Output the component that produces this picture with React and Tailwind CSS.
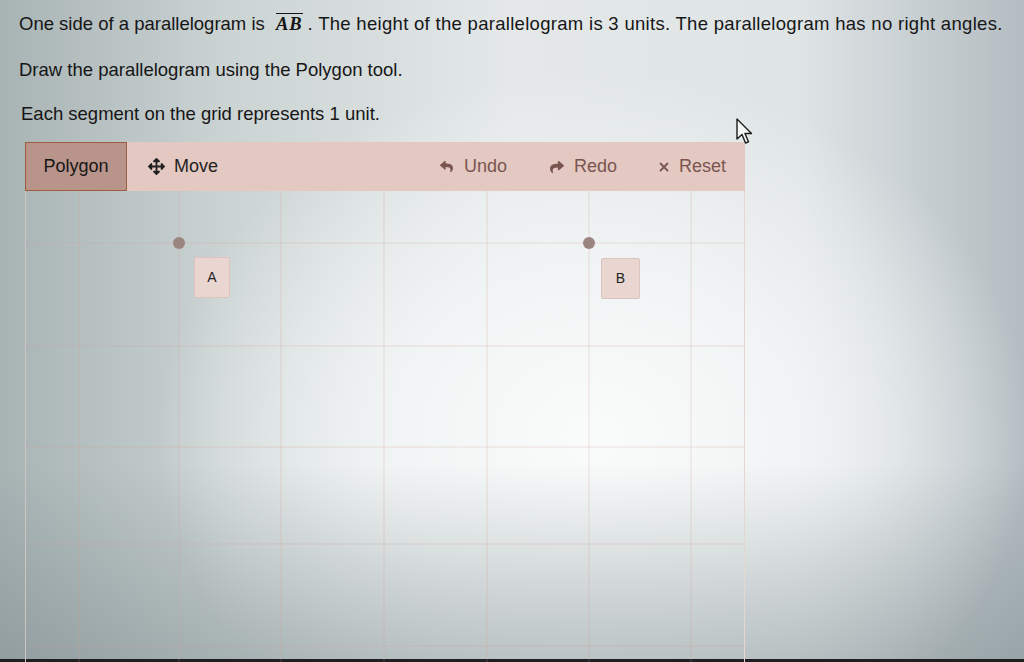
import { FaArrowsAlt, FaReply, FaShare } from "react-icons/fa";

const cols = [53, 153, 255, 358, 461, 563, 665];
const rows = [52, 155, 256, 353, 455];

function Grid() {
    return (
        <svg width="718" height="475" className="block">
            {cols.map((x) => (
                <line key={"c" + x} x1={x} y1="0" x2={x} y2="475" stroke="rgba(205,160,150,0.3)" strokeWidth="1" />
            ))}
            {rows.map((y) => (
                <line key={"r" + y} x1="0" y1={y} x2="718" y2={y} stroke="rgba(205,160,150,0.3)" strokeWidth="1" />
            ))}
            <circle cx="153" cy="52" r="6" fill="#9b8580" />
            <circle cx="563" cy="52" r="6" fill="#9b8580" />
        </svg>
    );
}

function Cursor() {
    return (
        <svg width="18" height="28" viewBox="0 0 18 28" className="absolute left-[736px] top-[118px]">
            <path d="M1 1 L1 21 L6 16.5 L9.5 25 L12.5 23.8 L9 15.5 L15.5 15.5 Z" fill="#f4f6f6" stroke="#1c1c1c" strokeWidth="1.4" strokeLinejoin="round" />
        </svg>
    );
}

export default function App() {
    return (
        <div
            className="relative w-[1024px] h-[662px] overflow-hidden font-['Liberation_Sans',Arial,sans-serif] text-[#161616] bg-[radial-gradient(ellipse_50%_65%_at_58%_66%,#fafcfc_0%,#f1f4f4_40%,rgba(236,240,240,0)_85%),linear-gradient(to_right,#a8b3b4_0%,#cbd3d3_22%,#e4e8e8_50%,#dfe4e5_78%,#b4bdc2_100%)]"
        >
            <div className="absolute inset-0 bg-[linear-gradient(to_top,rgba(110,125,128,0.4)_0%,rgba(110,125,128,0)_30%)]" />
            <div className="absolute left-0 right-0 bottom-0 h-[3px] bg-[#1d1f20]" />

            <div className="relative pl-[19px] pt-[13px] text-[18.5px] leading-[21px]">
                <p>
                    One side of a parallelogram is{" "}
                    <span className="inline-block ml-[6px] mr-[5px] border-t-[1.5px] border-[#161616] pt-[1px] leading-[19px] font-['Liberation_Serif',serif] italic font-bold tracking-[1px]">
                        AB
                    </span>
                    <span className="tracking-[0.3px]">. The height of the parallelogram is 3 units. The parallelogram has no right angles.</span>
                </p>
                <p className="mt-[25px]">Draw the parallelogram using the Polygon tool.</p>
                <p className="mt-[23px] pl-[2px]">Each segment on the grid represents 1 unit.</p>
            </div>

            <div className="relative ml-[25px] mt-[18px] w-[720px]">
                <div className="flex items-center h-[49px] bg-[#e4c9c2] text-[18px]">
                    <div className="flex items-center justify-center w-[102px] h-full bg-[#b8948a] border border-[#9c5e3c] text-[#161616]">
                        Polygon
                    </div>
                    <div className="flex items-center ml-[21px] text-[#222]">
                        <FaArrowsAlt className="w-[17px] h-[17px]" />
                        <span className="ml-[9px]">Move</span>
                    </div>
                    <div className="flex items-center ml-auto mr-[19px] text-[#7a5550]">
                        <FaReply className="w-[13px] h-[13px]" />
                        <span className="ml-[11px]">Undo</span>
                        <FaShare className="ml-[43px] w-[14px] h-[14px]" />
                        <span className="ml-[10px]">Redo</span>
                        <svg width="10" height="10" viewBox="0 0 10 10" className="ml-[42px]">
                            <path d="M1 1 L9 9 M9 1 L1 9" stroke="#7a5550" strokeWidth="1.8" />
                        </svg>
                        <span className="ml-[10px]">Reset</span>
                    </div>
                </div>
                <div className="relative border-l border-r border-l-[#cdc5c2] border-r-[#e6d5d1]">
                    <Grid />
                    <div className="absolute left-[168px] top-[66px] w-[36px] h-[41px] flex items-center justify-center bg-[#ead6d1] border border-[#dcc3bd] rounded-[2px] text-[14px] text-[#222]">
                        A
                    </div>
                    <div className="absolute left-[575px] top-[67px] w-[39px] h-[41px] flex items-center justify-center bg-[#ead6d1] border border-[#dcc3bd] rounded-[2px] text-[14px] text-[#222]">
                        B
                    </div>
                </div>
            </div>

            <Cursor />
        </div>
    );
}
